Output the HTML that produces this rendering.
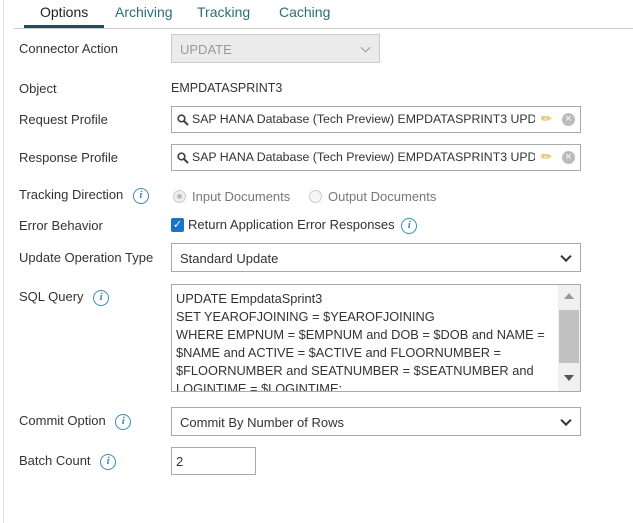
<!DOCTYPE html>
<html><head><style>
*{box-sizing:border-box;margin:0;padding:0}
body{width:633px;height:523px;background:#fff;font-family:"Liberation Sans",sans-serif;font-size:13px;color:#333;position:relative;overflow:hidden}
.a{position:absolute;white-space:nowrap}
.tab{position:absolute;top:4px;font-size:14px;color:#2a6f77}
.lbl{position:absolute;left:19px;line-height:16px}
.box{position:absolute;border:1px solid #aaa;background:#fff}
.info{display:inline-block;width:16px;height:16px;border:1.5px solid #3b8bb5;border-radius:50%;color:#3b8bb5;font:italic bold 11px "Liberation Serif",serif;text-align:center;line-height:13px;vertical-align:middle}
.chev{position:absolute;right:10px;top:50%;width:8px;height:8px;border-right:2px solid #333;border-bottom:2px solid #333;transform:translateY(-70%) rotate(45deg)}
</style></head><body>
<div class="a" style="left:3px;top:0;width:1px;height:523px;background:#ddd"></div>
<div class="tab" style="left:40px;color:#222">Options</div>
<div class="tab" style="left:115px">Archiving</div>
<div class="tab" style="left:197px">Tracking</div>
<div class="tab" style="left:279px">Caching</div>
<div class="a" style="left:14px;top:28px;width:619px;height:1px;background:#ccc"></div>
<div class="a" style="left:24px;top:25px;width:80px;height:3px;background:#1f4f5a"></div>

<div class="lbl" style="top:41px">Connector Action</div>
<div class="box" style="left:171px;top:34px;width:209px;height:29px;background:#ebebeb;border-color:#ccc"><span class="a" style="left:8px;top:7px;color:#999">UPDATE</span><div class="chev" style="border-color:#999;width:7px;height:7px;border-width:1.5px"></div></div>

<div class="lbl" style="top:81px">Object</div>
<div class="a" style="left:171px;top:81px;font-size:12.5px">EMPDATASPRINT3</div>

<div class="lbl" style="top:112px">Request Profile</div>
<div class="box" style="left:171px;top:106px;width:410px;height:27px">
<svg class="a" style="left:5px;top:7px" width="12" height="12" viewBox="0 0 12 12"><circle cx="4.5" cy="4.5" r="3.3" fill="none" stroke="#444" stroke-width="1.7"/><path d="M7 7L11 11" stroke="#444" stroke-width="2"/></svg>
<span class="a" style="left:20px;top:5px;width:343px;overflow:hidden;font-size:12.3px">SAP HANA Database (Tech Preview) EMPDATASPRINT3 UPDATE</span>
<span class="a" style="left:369px;top:4px;color:#e0a020">&#9999;</span>
<span class="a" style="left:390px;top:6px;width:13px;height:13px;border-radius:50%;background:#bbb;color:#fff;font-size:11px;line-height:13px;text-align:center">×</span></div>

<div class="lbl" style="top:150px">Response Profile</div>
<div class="box" style="left:171px;top:144px;width:410px;height:27px">
<svg class="a" style="left:5px;top:7px" width="12" height="12" viewBox="0 0 12 12"><circle cx="4.5" cy="4.5" r="3.3" fill="none" stroke="#444" stroke-width="1.7"/><path d="M7 7L11 11" stroke="#444" stroke-width="2"/></svg>
<span class="a" style="left:20px;top:5px;width:343px;overflow:hidden;font-size:12.3px">SAP HANA Database (Tech Preview) EMPDATASPRINT3 UPDATE</span>
<span class="a" style="left:369px;top:4px;color:#e0a020">&#9999;</span>
<span class="a" style="left:390px;top:6px;width:13px;height:13px;border-radius:50%;background:#bbb;color:#fff;font-size:11px;line-height:13px;text-align:center">×</span></div>

<div class="lbl" style="top:187px">Tracking Direction <span class="info" style="margin-left:6px">i</span></div>
<div class="a" style="left:173px;top:190px;width:13px;height:13px;border:1px solid #ccc;border-radius:50%;background:#eee"><div style="margin:3px;width:5px;height:5px;border-radius:50%;background:#bbb"></div></div>
<div class="a" style="left:192px;top:189px;color:#777">Input Documents</div>
<div class="a" style="left:309px;top:190px;width:13px;height:13px;border:1px solid #ccc;border-radius:50%;background:#f6f6f6"></div>
<div class="a" style="left:328px;top:189px;color:#777">Output Documents</div>

<div class="lbl" style="top:218px">Error Behavior</div>
<div class="a" style="left:171px;top:218px;width:13px;height:14px;background:#1a73c8;border-radius:2px;color:#fff;font-size:11px;line-height:14px;text-align:center">✓</div>
<div class="a" style="left:188px;top:217px">Return Application Error Responses <span class="info" style="margin-left:3px">i</span></div>

<div class="lbl" style="top:250px">Update Operation Type</div>
<div class="box" style="left:171px;top:243px;width:410px;height:29px"><span class="a" style="left:8px;top:7px">Standard Update</span><div class="chev"></div></div>

<div class="lbl" style="top:289px">SQL Query <span class="info" style="margin-left:6px">i</span></div>
<div class="box" style="left:171px;top:284px;width:410px;height:108px;overflow:hidden">
<div class="a" style="left:4px;top:5px;line-height:18px;font-size:12.8px;white-space:pre">UPDATE EmpdataSprint3
SET YEAROFJOINING = $YEAROFJOINING
WHERE EMPNUM = $EMPNUM and DOB = $DOB and NAME =
$NAME and ACTIVE = $ACTIVE and FLOORNUMBER =
$FLOORNUMBER and SEATNUMBER = $SEATNUMBER and
LOGINTIME = $LOGINTIME;</div>
<div class="a" style="right:0;top:0;width:22px;height:106px;background:#f0f0f0"></div>
<div class="a" style="right:1px;top:25px;width:20px;height:53px;background:#c1c1c1"></div>
<div class="a" style="right:6px;top:8px;border:5px solid transparent;border-bottom:6px solid #999;border-top:0"></div>
<div class="a" style="right:6px;top:90px;border:5px solid transparent;border-top:6px solid #555;border-bottom:0"></div>
</div>

<div class="lbl" style="top:413px">Commit Option <span class="info" style="margin-left:6px">i</span></div>
<div class="box" style="left:171px;top:407px;width:410px;height:29px"><span class="a" style="left:8px;top:7px">Commit By Number of Rows</span><div class="chev"></div></div>

<div class="lbl" style="top:453px">Batch Count <span class="info" style="margin-left:6px">i</span></div>
<div class="box" style="left:171px;top:447px;width:85px;height:28px"><span class="a" style="left:4px;top:6px">2</span></div>
</body></html>
